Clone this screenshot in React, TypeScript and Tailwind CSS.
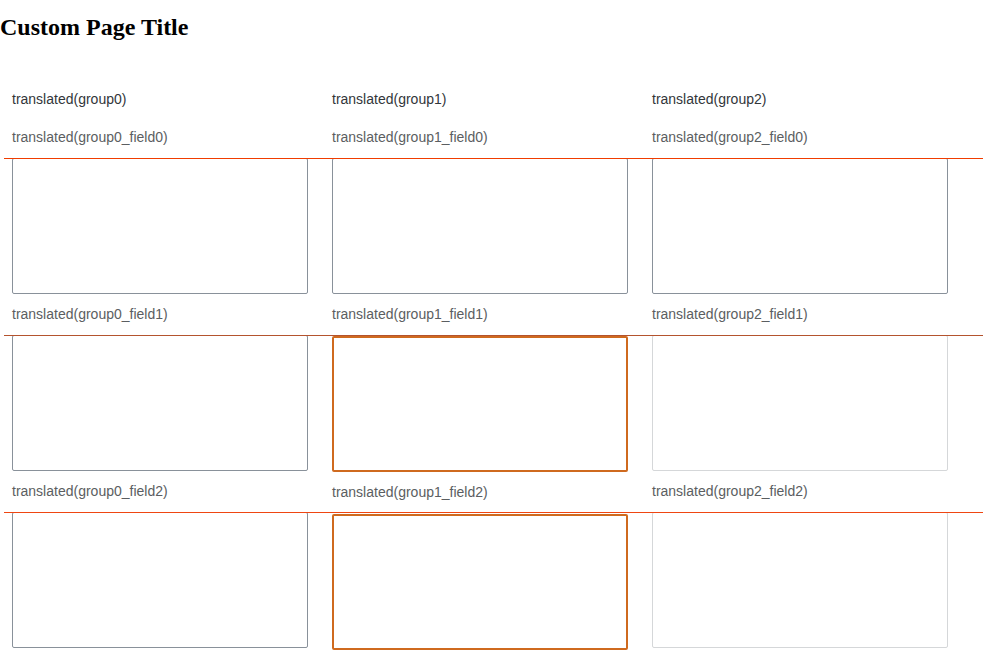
type Field = { label: string; tone: "default" | "warning" | "readonly" };

const groups: { title: string; fields: Field[] }[] = [
  {
    title: "translated(group0)",
    fields: [
      { label: "translated(group0_field0)", tone: "default" },
      { label: "translated(group0_field1)", tone: "default" },
      { label: "translated(group0_field2)", tone: "default" },
    ],
  },
  {
    title: "translated(group1)",
    fields: [
      { label: "translated(group1_field0)", tone: "default" },
      { label: "translated(group1_field1)", tone: "warning" },
      { label: "translated(group1_field2)", tone: "warning" },
    ],
  },
  {
    title: "translated(group2)",
    fields: [
      { label: "translated(group2_field0)", tone: "default" },
      { label: "translated(group2_field1)", tone: "readonly" },
      { label: "translated(group2_field2)", tone: "readonly" },
    ],
  },
];

function FieldBox({ field }: { field: Field }) {
  const box =
    field.tone === "warning"
      ? "mt-px border-2 border-[#cf6a1f]"
      : field.tone === "readonly"
        ? "border border-[#d5d7d9]"
        : "border border-[#89919a]";

  return (
    <div className="flex flex-col">
      <div className="pt-[12px] pb-[13px] text-[14px] leading-[16px] text-[#5b5e61]">
        {field.label}
      </div>
      <textarea
        aria-label={field.label}
        className={`block h-[136px] w-[296px] resize-none rounded-[2px] bg-white ${box}`}
      />
    </div>
  );
}

export default function App() {
  return (
    <div className="relative min-h-[661px] w-full bg-white pt-[13px]">
      <h2 className="text-[24px] leading-[28px] font-bold text-black [font-family:'Liberation_Serif',serif]">
        Custom Page Title
      </h2>

      <div className="mt-[50px] flex px-3 [font-family:'Liberation_Sans',Arial,sans-serif]">
        {groups.map((g) => (
          <div key={g.title} className="flex w-[320px] flex-col">
            <div className="text-[14px] leading-[16px] text-[#32363a]">
              {g.title}
            </div>
            <div className="h-[10px]" />
            {g.fields.map((f) => (
              <FieldBox key={f.label} field={f} />
            ))}
          </div>
        ))}
      </div>

      {/* row guide lines drawn over the form */}
      <div
        aria-hidden="true"
        className="pointer-events-none absolute top-[158px] left-[4px] w-[979px] border-t border-[#f03c00]"
      />
      <div
        aria-hidden="true"
        className="pointer-events-none absolute top-[335px] left-[4px] w-[979px] border-t border-[#b4532e]"
      />
      <div
        aria-hidden="true"
        className="pointer-events-none absolute top-[512px] left-[4px] w-[979px] border-t border-[#ef4612]"
      />
    </div>
  );
}
